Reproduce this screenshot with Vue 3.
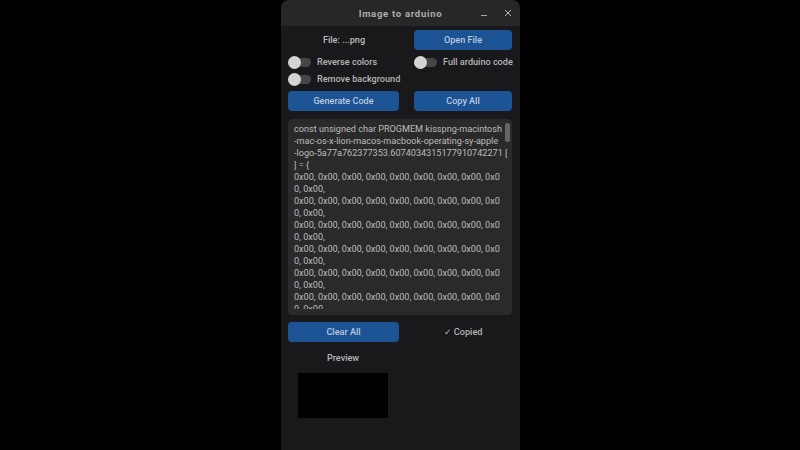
<script setup>
const header = [
  'const unsigned char PROGMEM kisspng-macintosh',
  '-mac-os-x-lion-macos-macbook-operating-sy-apple',
  '-logo-5a77a762377353.6074034315177910742271 [',
  '] = {'
]
const rows = Array.from({ length: 6 })
</script>

<template>
  <div class="page">
    <div class="window">
      <header class="titlebar">
        <span class="title">Image to arduino</span>
        <svg class="win-icon min" width="8" height="8" viewBox="0 0 8 8"><path d="M1 6.500h6" stroke="#a8a8a8" stroke-width="1" /></svg>
        <svg class="win-icon close" width="8" height="8" viewBox="0 0 8 8"><path d="M1 1l6 6M7 1l-6 6" stroke="#b8b8b8" stroke-width="1" /></svg>
      </header>
      <main class="content">
        <div class="grid top-grid">
          <div class="file">File: ...png</div>
          <button class="btn">Open File</button>
        </div>
        <div class="grid switches">
          <div class="switch-col">
            <label class="switch-row"><span class="track"><span class="knob"></span></span>Reverse colors</label>
            <label class="switch-row"><span class="track"><span class="knob"></span></span>Remove background</label>
          </div>
          <label class="switch-row"><span class="track"><span class="knob"></span></span>Full arduino code</label>
        </div>
        <div class="grid actions">
          <button class="btn">Generate Code</button>
          <button class="btn">Copy All</button>
        </div>
        <div class="textbox">
          <div class="code">
            <div v-for="line in header" :key="line">{{ line }}</div>
            <template v-for="(r, i) in rows" :key="i">
              <div>0x00, 0x00, 0x00, 0x00, 0x00, 0x00, 0x00, 0x00, 0x0</div>
              <div>0, 0x00,</div>
            </template>
          </div>
          <div class="scroll-thumb"></div>
        </div>
        <div class="grid bottom">
          <button class="btn">Clear All</button>
          <div class="copied">✓ Copied</div>
        </div>
        <div class="preview">
          <div class="preview-label">Preview</div>
          <div class="preview-box"></div>
        </div>
      </main>
    </div>
  </div>
</template>

<style>
html, body { margin: 0; background: #000; }
</style>

<style scoped>
.page {
  width: 800px;
  height: 450px;
  background: #000;
  display: flex;
  justify-content: center;
  overflow: hidden;
  font-family: Roboto, "Liberation Sans", sans-serif;
  color: #c9c9c9;
}
.window {
  width: 239px;
  height: 450px;
  margin-left: 1px;
  background: #19191b;
  border-radius: 8px 8px 0 0;
  display: flex;
  flex-direction: column;
}
.titlebar {
  height: 26px;
  flex: none;
  position: relative;
  background: #272727;
  border-radius: 8px 8px 0 0;
  display: flex;
  align-items: center;
  justify-content: center;
}
.title {
  font-family: Roboto, "Liberation Sans", sans-serif;
  font-size: 9.5px;
  font-weight: 700;
  letter-spacing: 0.72px;
  color: #adadad;
  margin-left: 0;
}
.win-icon { position: absolute; top: 9px; }
.min { left: 199px; }
.close { left: 223px; top: 9px; }
.content {
  padding: 4px 8px 0 7px;
  display: flex;
  flex-direction: column;
}
.grid {
  display: grid;
  grid-template-columns: 111px 98px;
  column-gap: 15px;
}
.btn {
  height: 20px;
  padding: 0;
  border: 0;
  border-radius: 4px;
  background: #1b5394;
  color: #bccadc;
  font-family: Roboto, "Liberation Sans", sans-serif;
  font-size: 9.1px;
  font-weight: 500;
  text-align: center;
}
.file {
  font-size: 9.1px;
  font-weight: 500;
  color: #bdbdbd;
  line-height: 20px;
  text-align: center;
  padding-left: 1px;
}
.switches { margin-top: 3px; height: 35px; }
.switch-col { display: flex; flex-direction: column; }
.switch-row {
  height: 16px;
  margin-top: 1px;
  display: flex;
  align-items: center;
  gap: 6px;
  font-size: 9.1px;
  font-weight: 500;
  color: #b5b5b5;
  white-space: nowrap;
}
.track {
  width: 23px;
  height: 9px;
  flex: none;
  background: #464648;
  border-radius: 5px;
  position: relative;
}
.knob {
  position: absolute;
  left: 0;
  top: -2px;
  width: 13px;
  height: 13px;
  border-radius: 50%;
  background: #d4d4d4;
}
.actions { margin-top: 3px; }
.textbox {
  margin-top: 8px;
  height: 196px;
  width: 224px;
  background: #2a2a2b;
  border-radius: 4px;
  position: relative;
  overflow: hidden;
  box-sizing: border-box;
  padding: 4px 0 6px 6px;
}
.code {
  height: 186px;
  overflow: hidden;
  font-size: 9.1px;
  line-height: 12px;
  color: #bcbcbc;
  white-space: nowrap;
}
.scroll-thumb {
  position: absolute;
  right: 2px;
  top: 4px;
  width: 5px;
  height: 19px;
  border-radius: 3px;
  background: #666;
}
.bottom { margin-top: 7px; }
.copied {
  font-size: 9.1px;
  font-weight: 500;
  line-height: 20px;
  text-align: center;
  color: #b5b5b5;
}
.preview {
  width: 110px;
  display: flex;
  flex-direction: column;
  align-items: center;
  margin-top: 9px;
}
.preview-label {
  font-size: 9.1px;
  font-weight: 500;
  line-height: 14px;
  color: #b5b5b5;
}
.preview-box {
  margin-top: 8px;
  width: 90px;
  height: 45px;
  background: #000;
}
</style>
